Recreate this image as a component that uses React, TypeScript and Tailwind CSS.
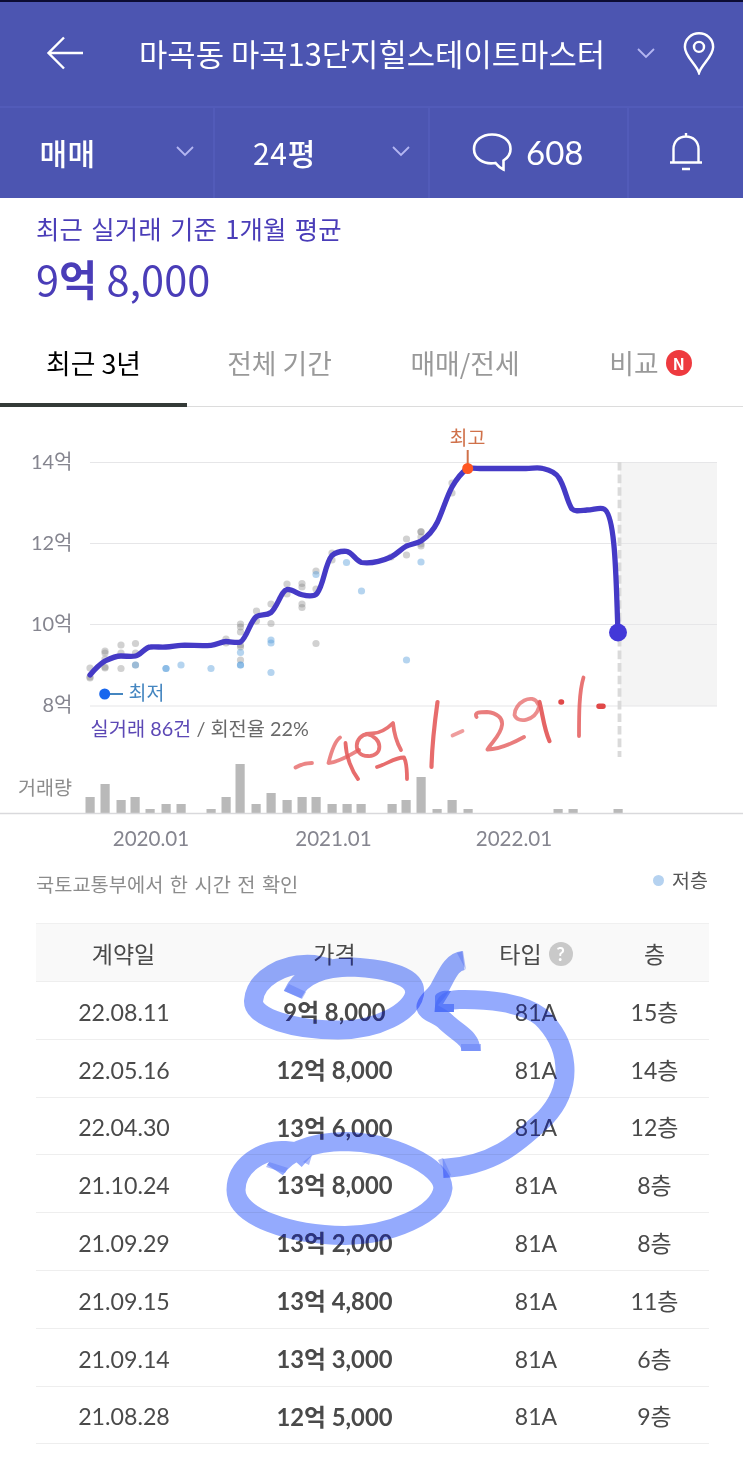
import * as React from "react";

type Deal = {
  date: string;
  price: string;
  type: string;
  floor: string;
};

const deals: Deal[] = [
  { date: "22.08.11", price: "9억 8,000", type: "81A", floor: "15층" },
  { date: "22.05.16", price: "12억 8,000", type: "81A", floor: "14층" },
  { date: "22.04.30", price: "13억 6,000", type: "81A", floor: "12층" },
  { date: "21.10.24", price: "13억 8,000", type: "81A", floor: "8층" },
  { date: "21.09.29", price: "13억 2,000", type: "81A", floor: "8층" },
  { date: "21.09.15", price: "13억 4,800", type: "81A", floor: "11층" },
  { date: "21.09.14", price: "13억 3,000", type: "81A", floor: "6층" },
  { date: "21.08.28", price: "12억 5,000", type: "81A", floor: "9층" },
];

// [x, height] of each monthly volume bar
const volumes = [
  [90, 16], [105, 29], [121, 13], [135, 16], [150, 4], [166, 9], [181, 9], [211, 4],
  [226, 16], [240, 49], [256, 9], [271, 20], [287, 13], [302, 16], [316, 16], [332, 9],
  [347, 9], [361, 9], [392, 9], [406, 13], [421, 36], [437, 4], [452, 13], [468, 4],
  [558, 4], [573, 4], [618, 4],
];

const grayDots = [
  [90, 668], [90, 677], [90, 678], [105, 651], [105, 653], [105, 659], [105, 667], [105, 668],
  [121, 645], [121, 653], [121, 668.5], [135.5, 643.5], [135.5, 653], [135.5, 665],
  [226, 639], [226, 643], [240.5, 624], [240.5, 627], [240.5, 632], [240.5, 645], [240.5, 647],
  [240.5, 660], [256.5, 611], [256.5, 621], [271, 604], [271, 623.5], [287, 584], [287, 594],
  [302, 583.5], [302, 587], [302, 604], [302, 607.5], [316, 571], [316, 589], [316, 643.5],
  [332, 553], [332, 560], [391, 557], [406.5, 539], [406.5, 555], [421, 531.5], [421, 532],
  [421, 537], [421, 544], [421, 546], [452, 483], [452, 493],
];

const blueDots = [
  [135.5, 665], [166, 668.5], [166, 668.5], [181, 665], [211, 668.5], [240.5, 652.5],
  [240.5, 665], [240.5, 665], [271, 640], [271, 643], [271, 672.5], [316, 574.5],
  [346.5, 562.5], [361.5, 591], [421, 562], [406.5, 660],
];

// two circled prices, the arrow's shaft and its head
const highlights = [
  "M292.5 994.5 C300 977 320 967.5 352 967 C390 969 417 977 414.5 994 C411 1012 378 1030 338 1030 C295 1030 253 1018 253.5 1001 C255 979 283 962 314 964.5 L330 968",
  "M275 1170 C287 1152 310 1142 345 1141.5 C390 1142 442 1165 443 1188 C440 1215 390 1235 345 1235.5 C290 1235 236 1217 236 1190 C236 1166 262 1149 285 1150.5 L299 1152 L308 1160",
  "M443 1168.5 C495 1166 520 1141 545 1118 C576 1085 568 1043 541 1017 C522 1002 485 999 459 999.5 C449 1000 444 1001 444 1012",
  "M463.5 960.5 C451 962 447 975 440 987 C436 996 428 999 426 1006 C425 1012 438 1014 446 1022 C460 1035 471 1038 471 1051",
];

function Chevron() {
  return (
    <svg width="18" height="11" viewBox="0 0 18 11" fill="none" stroke="#b4b6f2" strokeWidth="1.8">
      <path d="M1 1 L9 9 L17 1" />
    </svg>
  );
}

function Header() {
  return (
    <header className="h-[198px] border-t-2 border-[#0c0c33] bg-[#4c55b1] text-white">
      <div className="flex h-[106px] items-center border-b-2 border-[#525bb9] pb-[2px]">
        <svg className="ml-[46px]" width="38" height="34" viewBox="0 0 38 34" fill="none" stroke="#fff" strokeWidth="2.4">
          <path d="M18 1.5 L2.5 17 L18 32.5 M2 17 H37" />
        </svg>
        <h1 className="ml-[55px] w-[467px] whitespace-nowrap pt-px text-[30.8px] leading-none">
          마곡동 마곡13단지힐스테이트마스터
        </h1>
        <div className="ml-[31px] flex w-[18px]"><Chevron /></div>
        <svg className="ml-[28px]" width="32" height="44" viewBox="0 0 34 46" fill="none" stroke="#fff" strokeWidth="2.6">
          <path d="M17 44 C14 35 2 26.5 2 16.5 C2 8 9 2 17 2 C25 2 32 8 32 16.5 C32 26.5 20 35 17 44 Z" />
          <circle cx="17" cy="16.5" r="5.3" />
        </svg>
      </div>
      <div className="flex h-[90px] text-[30px] font-medium leading-none">
        <div className="flex w-[215px] items-center justify-between border-r-2 border-[#525bb9] pb-[3px] pl-[39.5px] pr-[19px]">
          <span className="tracking-[0.5px]">매매</span>
          <Chevron />
        </div>
        <div className="flex w-[215px] items-center justify-between border-r-2 border-[#525bb9] pb-[3px] pl-[38px] pr-[18px]">
          <span className="tracking-[0.7px]"><span className="font-normal">24</span>평</span>
          <Chevron />
        </div>
        <div className="flex w-[199px] items-center border-r-2 border-[#525bb9] pb-[2px] pl-[42px]">
          <svg width="40" height="40" viewBox="0 0 40 40" fill="none" stroke="#fff" strokeWidth="2.6">
            <path d="M31.5 37.5 C27.5 35.5 25 33 23.5 31 C11 33 2 26 2 17 C2 8.5 10 2.5 20 2.5 C30.5 2.5 38.5 8.5 38.5 17 C38.5 22 35.5 26 31.5 28.5 Z" />
          </svg>
          <span className="ml-[14px] pt-px font-['Lato'] text-[33px] font-normal">608</span>
        </div>
        <div className="flex flex-1 items-center justify-center pb-[3px]">
          <svg width="34" height="38" viewBox="0 0 34 38" fill="none" stroke="#fff" strokeWidth="2.4">
            <path d="M1 29.5 H33 M4.5 29.5 V16 C4.5 8.5 10 3.5 17 3.5 C24 3.5 29.5 8.5 29.5 16 V29.5 M17 0 V4 M13 36 H21" />
          </svg>
        </div>
      </div>
    </header>
  );
}

function Tabs() {
  return (
    <nav className="flex h-[88px] border-b border-[#dcdcdc] text-[26.8px] leading-[88px] text-[#999]">
      <div className="h-[88px] w-[187px] border-b-4 border-[#343a37] text-center text-black">최근 3년</div>
      <div className="w-[185px] text-center">전체 기간</div>
      <div className="w-[186px] text-center">매매/전세</div>
      <div className="flex w-[185px] items-center justify-center gap-[7px]">
        비교
        <span className="flex size-[26px] items-center justify-center rounded-full bg-[#ee3a3f] text-base leading-none font-bold text-white">N</span>
      </div>
    </nav>
  );
}

function PriceChart() {
  return (
    <svg className="block font-['Lato','Noto_Sans_CJK_KR',sans-serif]" width="743" height="454" viewBox="0 407 743 454">
      <rect x="620" y="462" width="97" height="244" fill="#f4f4f4" />
      <g stroke="#e6e6e8" strokeWidth="1.2">
        <path d="M90 462.5 H717 M90 543.5 H717 M90 624.5 H717 M90 706 H717" />
      </g>
      <g fill="#85858f" fontSize="20" textAnchor="end">
        <text x="72.5" y="468.5">14억</text>
        <text x="72.5" y="550">12억</text>
        <text x="72.5" y="631">10억</text>
        <text x="72.5" y="712">8억</text>
        <text x="72" y="795" fill="#8c8c8c" fontSize="19.6">거래량</text>
      </g>

      <g fill="#808080" fillOpacity="0.36">
        {grayDots.map(([x, y], i) => <circle key={i} cx={x} cy={y} r="3.6" />)}
      </g>
      <g fill="#5b9fdb" fillOpacity="0.45">
        {blueDots.map(([x, y], i) => <circle key={i} cx={x} cy={y} r="3.6" />)}
      </g>

      <path d="M619.5 462 V757" stroke="#dadada" strokeWidth="3.8" strokeDasharray="8.6 3.97" />
      <path
        d="M90 675 C95 669 100 664 105 661 C111 658 116 656 121 656 C127 656 131 657 135.5 656 C141 655 145 647 150.5 647 C156 646.5 161 647.5 166 647 C171 647 176 645.5 181 645.3 C191 645 201 646 211 645.3 C217 645 221 641.5 226 641.5 C231 641.5 237 643.5 240.5 642 C247 638 250 621 256.5 616.5 C261 614 266 616 271 612.5 C278 606 281 591 287 589.5 C292 589 297 593.5 302 594.8 C307 596 314 597 317 593.5 C324 585 325 563 332 555.5 C336 552 342 551 346.5 551.3 C352 552 356 561 361.5 562.5 C372 564 382 561 391 557 C397 554 401 549 406.5 546 C411 544 417 543.5 421 541 C427 537 434 529 437.5 522 C443 510 447 496 452 487 C456 480 461 473 467.5 468.5 C472 467.5 477 468.5 482 468.5 H526 C533 468.5 537 467 543 468.5 C550 470 556 473 559 478 C565 487 567 502 572 509 C575 512 581 510.5 587 510 C593 510 600 507 604 509 C616 515 616 585 618 632"
        fill="none"
        stroke="#453ac6"
        strokeWidth="5.3"
        strokeLinecap="round"
      />
      <circle cx="618" cy="632.5" r="9" fill="#4338d8" />
      <path d="M467.7 450 V465" stroke="#d0714a" strokeWidth="2" />
      <circle cx="467.7" cy="468.5" r="5.5" fill="#ff5722" />
      <text x="467.5" y="445" fill="#d0714a" fontSize="19.5" textAnchor="middle">최고</text>
      <path d="M105 694 H123" stroke="#4586c0" strokeWidth="2" />
      <circle cx="104.7" cy="694" r="5.5" fill="#1766ee" />
      <text x="128.5" y="700" fill="#4586c0" fontSize="19.5">최저</text>

      <text x="90.5" y="735.5" fill="#6a6a6a" fontSize="19.8">
        <tspan fill="#5c48b5">실거래 86건</tspan> / 회전율 22%
      </text>

      <g fill="#b9b9b9">
        {volumes.map(([x, h]) => <rect key={x} x={x - 4.5} y={813 - h} width="9.2" height={h} />)}
      </g>
      <path d="M0 813.5 H743" stroke="#d9d9dc" strokeWidth="1.6" />
      <g fill="#85858f" fontSize="20.6" textAnchor="middle">
        <text x="151" y="846">2020.01</text>
        <text x="333.5" y="846">2021.01</text>
        <text x="514" y="846">2022.01</text>
      </g>
    </svg>
  );
}

function DealTable() {
  return (
    <table className="mx-[36px] w-[673px] table-fixed border-t border-[#f0f0f0] text-center font-['Lato','Noto_Sans_CJK_KR',sans-serif] text-[23px] leading-none text-[#4a4a4a]">
      <colgroup>
        <col className="w-[175px]" />
        <col className="w-[247px]" />
        <col className="w-[156px]" />
        <col className="w-[95px]" />
      </colgroup>
      <thead>
        <tr className="h-[58px] border-b border-[#eee] bg-[#f9f9f9]">
          <th className="pt-[3px] font-normal">계약일</th>
          <th className="pt-[3px] font-normal">가격</th>
          <th className="pt-[3px] font-normal">
            <span className="flex items-center justify-center gap-[7px]">
              타입
              <span className="flex size-6 items-center justify-center rounded-full bg-[#c9c9c9] text-lg leading-none font-bold text-white">?</span>
            </span>
          </th>
          <th className="pr-[14px] pt-[3px] font-normal">층</th>
        </tr>
      </thead>
      <tbody>
        {deals.map((deal) => (
          <tr key={deal.date} className="h-[57.8px] border-b border-[#eee]">
            <td className="pt-[4px] pl-px text-[23.2px]">{deal.date}</td>
            <td className="pt-[5px] text-[23.8px] font-bold">{deal.price}</td>
            <td className="pt-[4px]">{deal.type}</td>
            <td className="pr-[14px] pt-[4px]">{deal.floor}</td>
          </tr>
        ))}
      </tbody>
    </table>
  );
}

// Pen and highlighter strokes drawn over the page
function Scribbles() {
  return (
    <>
      <svg className="pointer-events-none absolute left-0 top-0" width="743" height="1462" fill="none">
        <g stroke="#e45c5c" strokeWidth="3.8" strokeLinecap="round" strokeLinejoin="round">
          <path d="M295.5 767.5 Q303 763 312 763" strokeOpacity="0.75" />
          <path d="M340 737.5 C335 741 331 753 328.5 763 C340 762 350 755 359 750" strokeOpacity="0.75" />
          <path d="M345.5 743 C346 757 352 771 358 779" strokeOpacity="0.9" />
          <path d="M368 734 C354 735 352 756 368 756 C383 757 384 737 366 734 L372 733.5 C382 733 389 727 393 723 C394 733 397 743 401 750" strokeOpacity="0.85" />
          <path d="M377 767 C387 764 396 757 404 757.5 C407 763 407 771 407 779" strokeOpacity="0.9" />
          <path d="M437.5 702 C435 720 432 745 431.5 767" strokeWidth="4.2" strokeOpacity="0.9" />
          <path d="M452.5 735.5 L462.5 731" strokeOpacity="0.6" />
          <path d="M476.5 717 C474 712 480 712 487 712 C497 713 503 718 502 725 C501 735 491 743 487.5 749.5 C501 749 515 742 524 737" strokeOpacity="0.8" />
          <path d="M538 704 C533 692 514 703 514.5 715 C518 724 535 721 539 707" strokeOpacity="0.7" />
          <path d="M539.5 702 C543 716 544 729 549.5 741" strokeWidth="4.2" strokeOpacity="0.95" />
          <path d="M583.5 677.5 C579 692 579 715 579 736" strokeOpacity="0.85" />
          <path d="M561 702 H561.5 M599 706.3 H603" stroke="#e04848" strokeWidth="5.5" />
        </g>
      </svg>
      <svg className="pointer-events-none absolute left-0 top-0 mix-blend-multiply" width="743" height="1462" fill="none">
        <g stroke="#94aafd" strokeWidth="19" strokeLinejoin="round">
          {highlights.map((d) => <path key={d} className="mix-blend-multiply" d={d} />)}
        </g>
        <g fill="#5f7cf5" fillOpacity="0.5">
          <path d="M284 991 L289 984 L306 992 L302 999 Z" />
          <path d="M266 1167 L269 1162 L288 1168 L285 1173 Z" />
          <path d="M303 1162 L312 1155 L309 1165 Z" />
          <path d="M438 1160 L443 1158 L451 1175 L447 1178 Z" />
          <path d="M457 953 L463 951 L466 970 Z" />
          <path d="M461 1044 H481 V1051 H461 Z" />
        </g>
        <path d="M435 996 C437 992 443 990 451 991 L443 1004 H454 V1012 H435 Z" fill="#4d70f8" fillOpacity="0.8" />
      </svg>
      {/* tints the text under the highlighter blue instead of black */}
      <svg className="pointer-events-none absolute left-0 top-0 mix-blend-lighten" width="743" height="1462" fill="none">
        <g stroke="#1e3282" strokeWidth="19" strokeLinejoin="round">
          {highlights.map((d) => <path key={d} d={d} />)}
        </g>
      </svg>
    </>
  );
}

export default function App() {
  return (
    <div className="relative h-[1462px] w-[743px] overflow-hidden bg-white font-['Noto_Sans_CJK_KR',sans-serif]">
      <Header />
      <section className="h-[121px] pl-[36px] pt-[15px] text-[#4a3db8]">
        <p className="text-[25.4px] leading-[30px] tracking-[0.2px] [word-spacing:2.2px]">최근 실거래 기준 1개월 평균</p>
        <p className="mt-[10px] text-[41.5px] leading-[50px]">
          9<b>억</b> 8,000
        </p>
      </section>
      <Tabs />
      <PriceChart />
      <div className="flex h-[62px] items-start justify-between pl-[36px] pr-[35px]">
        <p className="mt-[12px] text-[19.8px] leading-[22px] text-[#8c8c8c] [word-spacing:2px]">국토교통부에서 한 시간 전 확인</p>
        <div className="mt-[8px] flex items-center gap-2 text-[19.5px] leading-[22px] text-[#555]">
          <span className="size-[11px] rounded-full bg-[#b5d2f0]" />
          저층
        </div>
      </div>
      <DealTable />
      <Scribbles />
    </div>
  );
}
